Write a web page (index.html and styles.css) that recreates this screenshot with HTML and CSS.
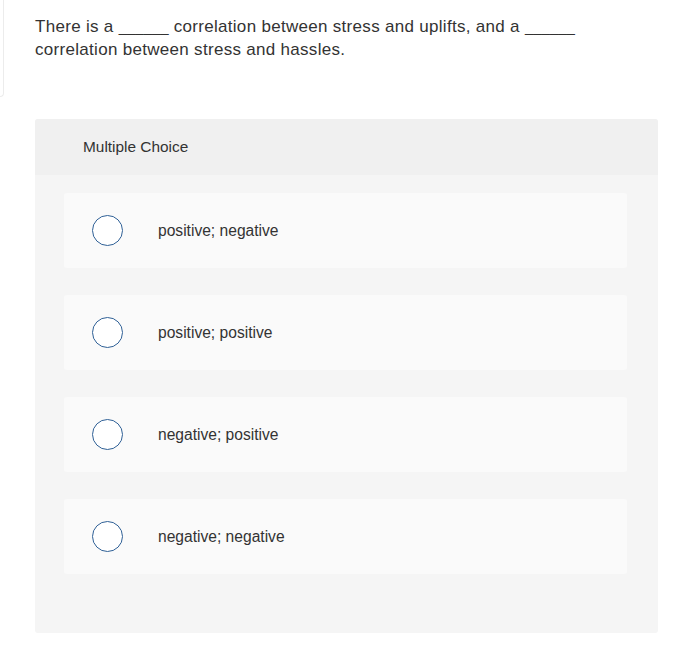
FILE: index.html
```html
<!DOCTYPE html>
<html lang="en">
<head>
<meta charset="utf-8">
<title>Multiple Choice</title>
<link rel="stylesheet" href="styles.css">
</head>
<body>
<div class="page">
  <div class="edge"></div>
  <main class="main">
    <p class="question">There is a <span class="blank">______</span> correlation between stress and uplifts, and a <span class="blank">______</span> correlation between stress and hassles.</p>
    <section class="panel">
      <div class="panel-head">Multiple Choice</div>
      <div class="choices">
        <label class="choice"><span class="radio"></span><span class="choice-text">positive; negative</span></label>
        <label class="choice"><span class="radio"></span><span class="choice-text">positive; positive</span></label>
        <label class="choice"><span class="radio"></span><span class="choice-text">negative; positive</span></label>
        <label class="choice"><span class="radio"></span><span class="choice-text">negative; negative</span></label>
      </div>
    </section>
  </main>
</div>
</body>
</html>
```

FILE: styles.css
```css
html, body {
  margin: 0;
  padding: 0;
  background: #fff;
}
body {
  font-family: "Liberation Sans", Arial, sans-serif;
  color: #333;
}
.page {
  display: flex;
  align-items: flex-start;
}
.edge {
  width: 3px;
  height: 96px;
  border-right: 1px solid #ececec;
  border-bottom: 1px solid #ececec;
  border-bottom-right-radius: 6px;
  flex: none;
}
.main {
  margin-left: 31px;
  width: 623px;
}
.question {
  margin: 15px 0 0 0;
  font-size: 17px;
  line-height: 23px;
  width: 570px;
  letter-spacing: 0.3px;
}
.blank {
  font-size: 15px;
  letter-spacing: 0;
}
.panel {
  margin-top: 58px;
  background: #f5f5f5;
  border-radius: 3px;
  overflow: hidden;
  padding-bottom: 59px;
}
.panel-head {
  background: #f0f0f0;
  height: 56px;
  display: flex;
  align-items: center;
  padding-left: 48px;
  font-size: 15.4px;
}
.choices {
  display: flex;
  flex-direction: column;
  gap: 27px;
  padding: 18px 31px 0 29px;
}
.choice {
  height: 75px;
  background: #fafafa;
  border-radius: 3px;
  display: flex;
  align-items: center;
  padding-left: 28px;
}
.radio {
  width: 29px;
  height: 29px;
  border: 1.5px solid #2f6096;
  border-radius: 50%;
  background: #fff;
  flex: none;
}
.choice-text {
  margin-left: 35px;
  font-size: 15.6px;
}
```
